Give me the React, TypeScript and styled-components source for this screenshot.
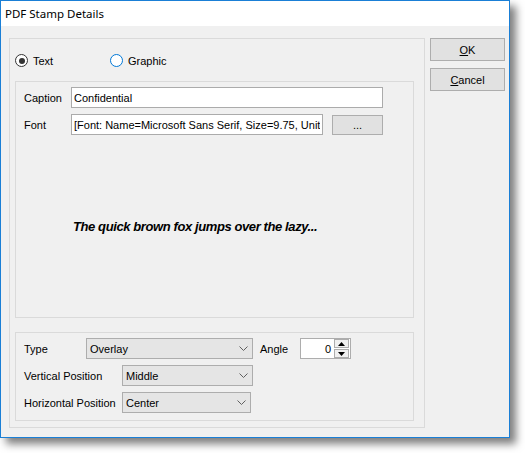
import styled, { createGlobalStyle } from "styled-components";

const GlobalStyle = createGlobalStyle`
  html, body {
    margin: 0;
    padding: 0;
    background: #ffffff;
  }
  body {
    width: 525px;
    height: 453px;
    overflow: hidden;
    font-family: "Liberation Sans", Arial, sans-serif;
    font-size: 11px;
    color: #000;
  }
`;

const Window = styled.div`
  width: 508px;
  height: 436px;
  border: 1px solid #1a7fd6;
  background: #f0f0f0;
  box-shadow: 6px 6px 8px rgba(0, 0, 0, 0.5);
  display: flex;
  flex-direction: column;
`;

const TitleBar = styled.div`
  height: 25px;
  flex-shrink: 0;
  background: #ffffff;
  display: flex;
  align-items: center;
  padding-left: 4px;
  font-family: "Noto Sans", "Open Sans", sans-serif;
  font-size: 11.5px;
  color: #000;
`;

const Body = styled.div`
  flex: 1;
  display: flex;
  align-items: flex-start;
  padding: 12px 0 0 8px;
  gap: 5px;
`;

const MainPanel = styled.div`
  width: 416px;
  height: 390px;
  box-sizing: border-box;
  border: 1px solid #dadada;
  padding: 15px 10px 6px 5px;
  display: flex;
  flex-direction: column;
  & > * {
    flex-shrink: 0;
  }
`;

const RadioRow = styled.div`
  height: 13px;
  display: flex;
  align-items: center;
`;

const RadioItem = styled.label<{ $width?: number }>`
  display: flex;
  align-items: center;
  gap: 5px;
  width: ${({ $width }) => ($width ? `${$width}px` : "auto")};
`;

const RadioCircle = styled.span<{ $checked?: boolean; $focus?: boolean }>`
  width: 11px;
  height: 11px;
  border-radius: 50%;
  border: 1px solid ${({ $focus }) => ($focus ? "#0078d7" : "#333333")};
  background: #ffffff;
  display: flex;
  align-items: center;
  justify-content: center;
  &::after {
    content: "";
    display: ${({ $checked }) => ($checked ? "block" : "none")};
    width: 6px;
    height: 6px;
    border-radius: 50%;
    background: #333333;
  }
`;

const Group = styled.div<{ $height: number; $top: number }>`
  width: 399px;
  height: ${({ $height }) => $height}px;
  box-sizing: border-box;
  margin-top: ${({ $top }) => $top}px;
  border: 1px solid #dadada;
  padding: 5px 0 0 8px;
  display: flex;
  flex-direction: column;
  gap: 6px;
`;

const FieldRow = styled.div`
  display: flex;
  align-items: center;
  height: 21px;
  flex-shrink: 0;
`;

const Label = styled.span<{ $width: number }>`
  width: ${({ $width }) => $width}px;
  flex-shrink: 0;
  white-space: nowrap;
`;

const TextBox = styled.input<{ $width: number }>`
  width: ${({ $width }) => $width}px;
  height: 21px;
  box-sizing: border-box;
  border: 1px solid #ababab;
  background: #ffffff;
  padding: 0 2px;
  font-family: "Liberation Sans", Arial, sans-serif;
  font-size: 11px;
  color: #000;
  outline: none;
`;

const PushButton = styled.button<{ $width: number; $height: number; $gap?: number }>`
  width: ${({ $width }) => $width}px;
  height: ${({ $height }) => $height}px;
  margin-left: ${({ $gap }) => $gap ?? 0}px;
  border: 1px solid #adadad;
  background: #e1e1e1;
  font-family: "Liberation Sans", Arial, sans-serif;
  font-size: 11px;
  color: #000;
  padding: 0;
`;

const Preview = styled.div`
  flex: 1;
  display: flex;
  align-items: center;
  padding: 0 0 6px 49px;
  font-family: "Liberation Sans", Arial, sans-serif;
  font-weight: bold;
  font-style: italic;
  font-size: 13px;
  letter-spacing: -0.4px;
`;

const Select = styled.div<{ $width: number }>`
  width: ${({ $width }) => $width}px;
  height: 21px;
  box-sizing: border-box;
  border: 1px solid #adadad;
  background: #e5e5e5;
  display: flex;
  align-items: center;
  justify-content: space-between;
  padding: 0 4px 0 3px;
`;

const AngleLabel = styled.span`
  width: 40px;
  margin-left: 7px;
`;

const Spin = styled.div`
  width: 51px;
  height: 21px;
  box-sizing: border-box;
  border: 1px solid #adadad;
  background: #ffffff;
  display: flex;
  align-items: center;
`;

const SpinValue = styled.span`
  flex: 1;
  text-align: right;
  padding-right: 3px;
`;

const SpinButtons = styled.div`
  width: 15px;
  height: 19px;
  display: flex;
  flex-direction: column;
  gap: 1px;
  margin-right: 1px;
`;

const SpinButton = styled.div`
  flex: 1;
  border: 1px solid #adadad;
  background: #f0f0f0;
  display: flex;
  align-items: center;
  justify-content: center;
`;

const SideColumn = styled.div`
  display: flex;
  flex-direction: column;
  gap: 7px;
`;

const Chevron = () => (
  <svg width="9" height="5" viewBox="0 0 9 5">
    <polyline points="0.5,0.5 4.5,4.5 8.5,0.5" fill="none" stroke="#606060" strokeWidth="1" />
  </svg>
);

const Triangle = ({ up }: { up?: boolean }) => (
  <svg width="7" height="4" viewBox="0 0 7 4">
    <polygon points={up ? "0,4 7,4 3.5,0" : "0,0 7,0 3.5,4"} fill="#000" />
  </svg>
);

export default function App() {
  return (
    <>
      <GlobalStyle />
      <Window>
        <TitleBar>PDF Stamp Details</TitleBar>
        <Body>
          <MainPanel>
            <RadioRow>
              <RadioItem $width={95}>
                <RadioCircle $checked />
                <span>Text</span>
              </RadioItem>
              <RadioItem>
                <RadioCircle $focus />
                <span>Graphic</span>
              </RadioItem>
            </RadioRow>

            <Group $height={237} $top={14}>
              <FieldRow>
                <Label $width={47}>Caption</Label>
                <TextBox $width={312} defaultValue="Confidential" />
              </FieldRow>
              <FieldRow>
                <Label $width={47}>Font</Label>
                <TextBox
                  $width={252}
                  defaultValue="[Font: Name=Microsoft Sans Serif, Size=9.75, Units=3, GdiCharSet=0, GdiVerticalFont=False]"
                />
                <PushButton $width={51} $height={20} $gap={9}>...</PushButton>
              </FieldRow>
              <Preview>The quick brown fox jumps over the lazy...</Preview>
            </Group>

            <Group $height={89} $top={14}>
              <FieldRow>
                <Label $width={62}>Type</Label>
                <Select $width={167}>
                  <span>Overlay</span>
                  <Chevron />
                </Select>
                <AngleLabel>Angle</AngleLabel>
                <Spin>
                  <SpinValue>0</SpinValue>
                  <SpinButtons>
                    <SpinButton><Triangle up /></SpinButton>
                    <SpinButton><Triangle /></SpinButton>
                  </SpinButtons>
                </Spin>
              </FieldRow>
              <FieldRow>
                <Label $width={98}>Vertical Position</Label>
                <Select $width={131}>
                  <span>Middle</span>
                  <Chevron />
                </Select>
              </FieldRow>
              <FieldRow>
                <Label $width={98}>Horizontal Position</Label>
                <Select $width={129}>
                  <span>Center</span>
                  <Chevron />
                </Select>
              </FieldRow>
            </Group>
          </MainPanel>

          <SideColumn>
            <PushButton $width={75} $height={23}><u>O</u>K</PushButton>
            <PushButton $width={75} $height={23}><u>C</u>ancel</PushButton>
          </SideColumn>
        </Body>
      </Window>
    </>
  );
}
